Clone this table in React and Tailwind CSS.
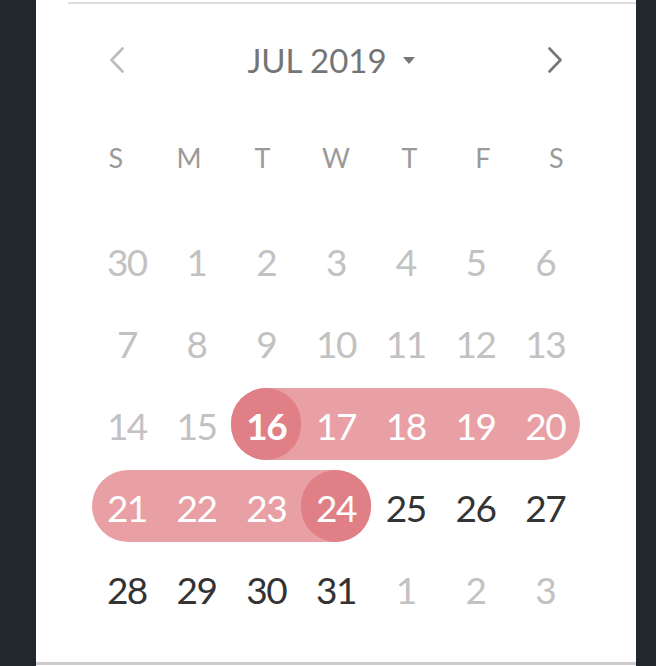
import React from "react";

const weekDays = ["S", "M", "T", "W", "T", "F", "S"];

// [label, kind] kind: "off" = other month / before range, "in" = in range, "day" = normal
const weeks = [
  [["30", "off"], ["1", "off"], ["2", "off"], ["3", "off"], ["4", "off"], ["5", "off"], ["6", "off"]],
  [["7", "off"], ["8", "off"], ["9", "off"], ["10", "off"], ["11", "off"], ["12", "off"], ["13", "off"]],
  [["14", "off"], ["15", "off"], ["16", "start"], ["17", "in"], ["18", "in"], ["19", "in"], ["20", "in"]],
  [["21", "in"], ["22", "in"], ["23", "in"], ["24", "end"], ["25", "day"], ["26", "day"], ["27", "day"]],
  [["28", "day"], ["29", "day"], ["30", "day"], ["31", "day"], ["1", "off"], ["2", "off"], ["3", "off"]],
];

function DayCell({ label, kind, col }) {
  const inRange = kind === "in" || kind === "start" || kind === "end";
  const roundLeft = kind === "start" || (inRange && col === 0);
  const roundRight = kind === "end" || (inRange && col === 6);

  const cellBg = inRange ? "bg-[#e8a0a4]" : "";
  const rounding = `${roundLeft ? "rounded-l-full" : ""} ${roundRight ? "rounded-r-full" : ""}`;

  let color = "text-[#333333]";
  if (kind === "off") color = "text-[#c2c2c2]";
  if (inRange) color = "text-white";

  const isEdge = kind === "start" || kind === "end";

  return (
    <div className={`h-[72px] flex items-center justify-center ${cellBg} ${rounding}`}>
      <span
        className={`flex items-center justify-center h-[72px] w-[70px] shrink-0 rounded-full pt-[3px] text-[37px] leading-none tracking-[-1.5px] ${color} ${
          isEdge ? "bg-[#e07f85]" : ""
        } ${kind === "start" ? "font-bold" : "font-normal"}`}
      >
        {label}
      </span>
    </div>
  );
}

export default function App() {
  return (
    <div className="min-h-[666px] w-full bg-[#22272e] flex" style={{ fontFamily: "Lato, 'Open Sans', sans-serif" }}>
      <div className="ml-[36px] w-[600px] h-[666px] bg-white flex flex-col overflow-hidden">
        {/* top divider */}
        <div className="mt-[2px] ml-[32px] h-[2px] bg-[#dddddd]" />

        {/* month header */}
        <div className="mt-[32px] h-[48px] px-[74px] flex items-center justify-between">
          <svg width="14" height="26" viewBox="0 0 14 26" fill="none">
            <polyline points="12.5,1.5 1.5,13 12.5,24.5" stroke="#bdbdbd" strokeWidth="2.6" strokeLinecap="round" strokeLinejoin="round" />
          </svg>

          <button className="flex items-center gap-[16px] pr-[10px] text-[33px] leading-none text-[#757575]">
            <span>JUL 2019</span>
            <svg width="12" height="7" viewBox="0 0 12 7">
              <polygon points="0,0 12,0 6,7" fill="#777777" />
            </svg>
          </button>

          <svg width="14" height="26" viewBox="0 0 14 26" fill="none">
            <polyline points="1.5,1.5 12.5,13 1.5,24.5" stroke="#777777" strokeWidth="2.6" strokeLinecap="round" strokeLinejoin="round" />
          </svg>
        </div>

        {/* weekday labels */}
        <div className="mt-[58px] h-[30px] px-[43px] grid grid-cols-7">
          {weekDays.map((d, i) => (
            <div key={i} className="flex items-center justify-center text-[27px] leading-none text-[#9a9a9a]">
              {d}
            </div>
          ))}
        </div>

        {/* days */}
        <div className="mt-[52px] px-[56px] flex flex-col gap-y-[10px]">
          {weeks.map((week, r) => (
            <div key={r} className="grid grid-cols-7">
              {week.map(([label, kind], c) => (
                <DayCell key={c} label={label} kind={kind} col={c} />
              ))}
            </div>
          ))}
        </div>

        {/* bottom divider */}
        <div className="mt-[38px] h-[3px] bg-[#cccccc]" />
      </div>
    </div>
  );
}
